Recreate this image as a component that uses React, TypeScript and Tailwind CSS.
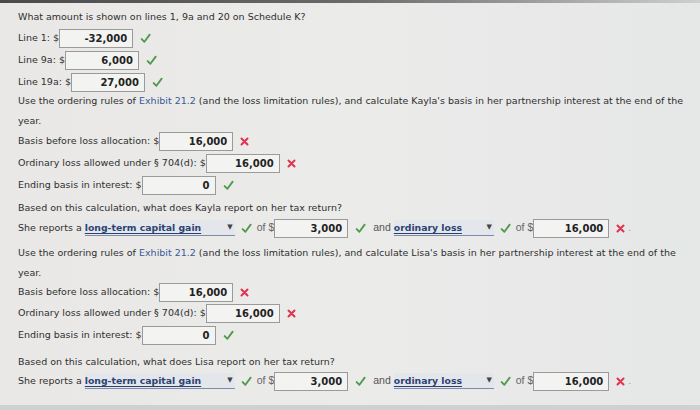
import React from 'react';

const font = { fontFamily: '"DejaVu Sans", Verdana, sans-serif' };
const arial = { fontFamily: '"Liberation Sans", Arial, sans-serif' };

function Check() {
  return (
    <svg width="11" height="11" viewBox="0 0 10 10" className="shrink-0">
      <path d="M1.5 5.5 L4 8 L8.8 1.5" fill="none" stroke="#4f9a4c" strokeWidth="1.7" strokeLinecap="round" strokeLinejoin="round" />
    </svg>
  );
}

function Cross() {
  return (
    <svg width="9" height="9" viewBox="0 0 9 9" className="shrink-0">
      <path d="M1.5 1.5 L7.5 7.5 M7.5 1.5 L1.5 7.5" fill="none" stroke="#e0334f" strokeWidth="2" strokeLinecap="round" />
    </svg>
  );
}

function Box({ value, w = 'w-[74px]' }: { value: string; w?: string }) {
  return (
    <div className={`${w} h-[19px] border border-[#9a9a9a] bg-[#f3f3f2] flex items-center justify-end pr-[5px] font-bold text-[#222] text-[10px]`}>
      {value}
    </div>
  );
}

function Select({ value, w }: { value: string; w: string }) {
  return (
    <div className={`${w} h-[16px] flex items-center justify-between border-b border-[#7d8cab] bg-[#e3e6eb]`}>
      <span className="font-bold text-[#2c4372] underline decoration-[#2c4372] underline-offset-[2px] text-[9.3px]">{value}</span>
      <span className="text-[7px] text-[#444] pr-[2px]">▼</span>
    </div>
  );
}

function Row({ label, value, ok, className = '' }: { label: string; value: string; ok: boolean; className?: string }) {
  return (
    <div className={`h-[22px] flex items-center ${className}`}>
      <span>{label}</span>
      <Box value={value} />
      <span className="ml-[7px]">{ok ? <Check /> : <Cross />}</span>
    </div>
  );
}

function Report({ className = '' }: { className?: string }) {
  return (
    <div className={`h-[20px] flex items-center ${className}`}>
      <span className="mr-[3px]">She reports a</span>
      <Select value="long-term capital gain" w="w-[150px]" />
      <span className="ml-[6px]"><Check /></span>
      <span className="ml-[5px] text-[#666] text-[10.5px]" style={arial}>of $</span>
      <Box value="3,000" />
      <span className="ml-[7px]"><Check /></span>
      <span className="ml-[7px] mr-[3px] text-[#555] text-[10.5px]" style={arial}>and</span>
      <Select value="ordinary loss" w="w-[100px]" />
      <span className="ml-[6px]"><Check /></span>
      <span className="ml-[5px] text-[#666] text-[10.5px]" style={arial}>of $</span>
      <Box value="16,000" w="w-[76px]" />
      <span className="ml-[7px]"><Cross /></span>
      <span className="ml-[3px] text-[#999]">.</span>
    </div>
  );
}

function Section({ name, tight = false, className = '' }: { name: string; tight?: boolean; className?: string }) {
  return (
    <div className={className}>
      <p className="leading-[20px]">
        Use the ordering rules of <span className="text-[#3a5a99]">Exhibit 21.2</span> (and the loss limitation rules), and calculate {name}'s basis in her partnership interest at the end of the year.
      </p>
      <Row label="Basis before loss allocation: $" value="16,000" ok={false} className={tight ? 'mt-[-2px]' : 'mt-[-1px]'} />
      <Row label="Ordinary loss allowed under § 704(d): $" value="16,000" ok={false} className={tight ? 'mt-[-1px]' : ''} />
      <Row label="Ending basis in interest: $" value="0" ok={true} />
      <p className={`leading-[20px] ${tight ? 'mt-[6px]' : 'mt-[2px]'}`}>Based on this calculation, what does {name} report on her tax return?</p>
      <Report className={tight ? 'mt-[-1px]' : ''} />
    </div>
  );
}

export default function App() {
  return (
    <div className="w-[700px] h-[410px] overflow-hidden relative bg-gradient-to-r from-[#e9e8e6] via-[#ebebea] to-[#e6e7e7] text-[9.5px] text-[#2f2f2f]" style={font}>
      <div className="h-[3px] bg-gradient-to-r from-[#4a4a4a] via-[#6a6a6a] to-[#cfcfcf]" />
      <div className="pl-[18px] pr-[8px]">
        <p className="leading-[20px] mt-[4px]">What amount is shown on lines 1, 9a and 20 on Schedule K?</p>
        <Row label="Line 1: $" value="-32,000" ok={true} />
        <Row label="Line 9a: $" value="6,000" ok={true} />
        <Row label="Line 19a: $" value="27,000" ok={true} />
        <Section name="Kayla" className="mt-[-2px]" />
        <Section name="Lisa" tight className="mt-[5px]" />
      </div>
      <div className="absolute left-0 right-0 bottom-0 h-[5px] bg-[#cfd0d0]" />
    </div>
  );
}
